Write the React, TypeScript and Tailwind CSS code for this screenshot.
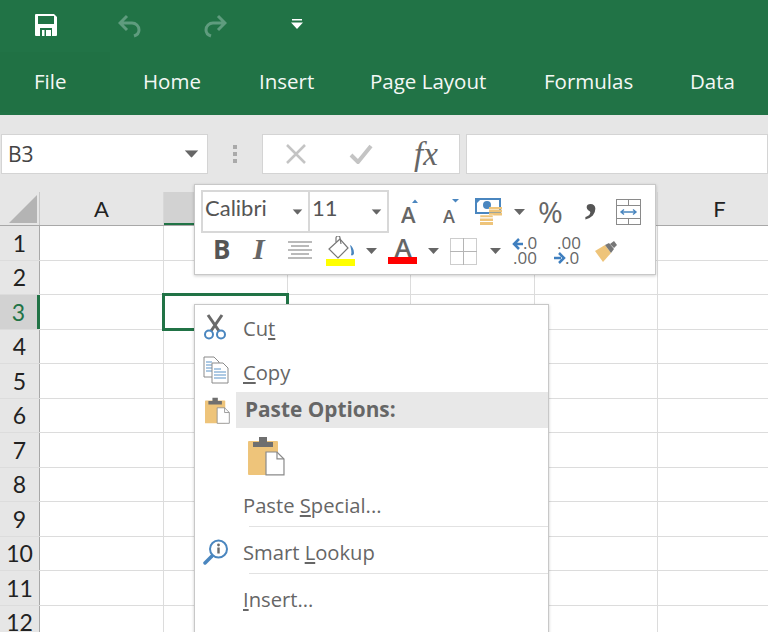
import { ReactNode } from "react";

const SEGOE = "font-['Open_Sans',sans-serif]";
const CALIBRI = "font-['Lato',sans-serif]";

const tabs = [
  { label: "File", width: "w-[110px] pl-[34px] bg-[#207144]" },
  { label: "Home", width: "w-[149px] pl-[33px]" },
  { label: "Insert", width: "w-[111px]" },
  { label: "Page Layout", width: "w-[174px]" },
  { label: "Formulas", width: "w-[146px]" },
  { label: "Data", width: "w-[78px]" },
];

const columns = [
  { label: "A", width: "w-[124px]" },
  { label: "", width: "w-[124px]", selected: true },
  { label: "", width: "w-[123px]" },
  { label: "", width: "w-[124px]" },
  { label: "", width: "w-[123px]" },
  { label: "F", width: "w-[124px]" },
];

const rows = [1, 2, 3, 4, 5, 6, 7, 8, 9, 10, 11, 12];

function Caret({ className = "" }: { className?: string }) {
  return (
    <svg width="11" height="6" viewBox="0 0 11 6" className={className}>
      <path d="M0 0h11L5.500 6z" fill="#666" />
    </svg>
  );
}

function SaveIcon() {
  return (
    <svg width="24" height="24" viewBox="0 0 24 24">
      <path d="M1 2a1 1 0 0 1 1-1h18l3 3v18a1 1 0 0 1-1 1H2a1 1 0 0 1-1-1z" fill="#fff" />
      <rect x="4" y="3" width="16" height="8" fill="#217346" />
      <rect x="6" y="15" width="12" height="8" fill="#217346" />
      <rect x="8" y="17" width="2.500" height="6" fill="#fff" />
      <rect x="12" y="17" width="5" height="6" fill="#fff" />
    </svg>
  );
}

function UndoIcon({ flip = false }: { flip?: boolean }) {
  return (
    <svg width="24" height="24" viewBox="0 0 24 24" className={flip ? "-scale-x-100" : ""}>
      <path d="M9 2 2 9l7 7M3 9h11a7 7 0 0 1 7 7c0 3-2 5-5 6" fill="none" stroke="#5f9c7e" strokeWidth="3" />
    </svg>
  );
}

function ScissorsIcon() {
  return (
    <svg width="24" height="26" viewBox="0 0 24 26" className="-translate-y-[2px]">
      <path d="M5 1l11 16M19 1 8 17" stroke="#6a6a6a" strokeWidth="3" fill="none" />
      <circle cx="6" cy="20.500" r="4" fill="none" stroke="#4a86bf" strokeWidth="2" />
      <circle cx="18" cy="20.500" r="4" fill="none" stroke="#4a86bf" strokeWidth="2" />
    </svg>
  );
}

function CopyIcon() {
  return (
    <svg width="26" height="28" viewBox="0 0 26 28" className="-translate-y-[2px]">
      <path d="M1 1h10l5 5v15H1z" fill="#fff" stroke="#8a8a8a" />
      <path d="M3 6h6M3 9h10M3 12h10M3 15h10" stroke="#5b93c7" />
      <path d="M9 7h11l5 5v15H9z" fill="#fff" stroke="#8a8a8a" />
      <path d="M11 13h7M11 16h12M11 19h12M11 22h12" stroke="#5b93c7" />
    </svg>
  );
}

function PasteIcon({ size }: { size: number }) {
  return (
    <svg width={size} height={size * 1.08} viewBox="0 0 37 40">
      <rect x="0" y="5" width="30" height="34" rx="1" fill="#eec47a" />
      <path d="M5 11V6h6V1h8v5h6v5z" fill="#6f6f6f" />
      <path d="M18 16h11l7 7v16H18z" fill="#fff" stroke="#8a8a8a" strokeWidth="1.200" />
      <path d="M29 16v7h7" fill="none" stroke="#8a8a8a" strokeWidth="1.200" />
    </svg>
  );
}

function LookupIcon() {
  return (
    <svg width="26" height="26" viewBox="0 0 26 26">
      <circle cx="15.500" cy="10" r="8.500" fill="#fff" stroke="#4a86bf" strokeWidth="2" />
      <path d="M9 17 2 24" stroke="#4a86bf" strokeWidth="3.500" strokeLinecap="round" />
      <circle cx="15.500" cy="6" r="1.400" fill="#6a6a6a" />
      <rect x="14.300" y="8.500" width="2.400" height="6" fill="#6a6a6a" />
    </svg>
  );
}

function GrowIcon({ small = false }: { small?: boolean }) {
  return (
    <svg width="20" height="26" viewBox="0 0 20 26">
      <text x="0" y="24" fontSize={small ? 18 : 22} fontFamily="Open Sans" fontWeight="600" fill="#666">A</text>
      <path d={small ? "M9 0h7l-3.500 3.500z" : "M11 4h6l-3-3.500z"} fill="#4a86bf" />
    </svg>
  );
}

function MoneyIcon() {
  return (
    <svg width="28" height="28" viewBox="0 0 28 28">
      <rect x="1" y="1" width="24" height="14" fill="#fff" stroke="#4a86bf" strokeWidth="2" />
      <path d="M1 1h5L1 6zM25 15h-4l4-4z" fill="#4a86bf" />
      <circle cx="12" cy="7" r="4" fill="#4a86bf" />
      <rect x="14" y="9" width="13" height="2.500" fill="#eec47a" />
      <rect x="14" y="12" width="13" height="2.500" fill="#eec47a" />
      <rect x="14" y="15" width="13" height="2.500" fill="#eec47a" />
      <rect x="5" y="17" width="13" height="2.500" fill="#eec47a" stroke="#fff" strokeWidth="0.500" />
      <rect x="5" y="20.500" width="13" height="2.500" fill="#eec47a" />
      <rect x="5" y="24" width="13" height="3" fill="#eec47a" />
    </svg>
  );
}

function WrapIcon() {
  return (
    <svg width="25" height="26" viewBox="0 0 25 26">
      <rect x="0.500" y="0.500" width="24" height="25" fill="#fff" stroke="#8a8a8a" />
      <path d="M0 6.500h25M0 19.500h25M12.500 0v6.500M12.500 19.500V26" stroke="#8a8a8a" />
      <path d="M6 13h13M8 10.500 5 13l3 2.500M17 10.500l3 2.500-3 2.500" fill="none" stroke="#4a86bf" strokeWidth="1.400" />
    </svg>
  );
}

function AlignIcon() {
  return (
    <svg width="24" height="20" viewBox="0 0 24 20">
      <path d="M0 1h24M3 5h18M0 9h24M3 13h18M0 17h24" stroke="#777" strokeWidth="1.200" />
    </svg>
  );
}

function FillIcon() {
  return (
    <svg width="30" height="30" viewBox="0 0 30 30">
      <path d="M14 3 3 13l9 9 10-10z" fill="#fff" stroke="#777" strokeWidth="1.200" />
      <path d="M10 6V2a2 2 0 0 1 4 0l1 6" fill="none" stroke="#777" strokeWidth="1.200" />
      <path d="M24 9c2 1 4 4 4 8 0 2-2 3-3 2 1-3 0-6-1-10z" fill="#4a86bf" />
      <rect x="0" y="23" width="29" height="7" fill="#ffff00" />
    </svg>
  );
}

function FontColorIcon() {
  return (
    <svg width="30" height="28" viewBox="0 0 30 28">
      <text x="15" y="20" textAnchor="middle" fontSize="26" fontFamily="Open Sans" fontWeight="600" fill="#666">A</text>
      <rect x="0" y="20" width="29" height="7" fill="#ff0000" />
    </svg>
  );
}

function BordersIcon() {
  return (
    <svg width="27" height="27" viewBox="0 0 27 27">
      <rect x="0.500" y="0.500" width="26" height="26" fill="none" stroke="#9a9a9a" strokeDasharray="1 1" />
      <path d="M13.500 0v27M0 13.500h27" stroke="#b5b5b5" />
    </svg>
  );
}

function DecimalIcon({ increase = false }: { increase?: boolean }) {
  const text = { fontSize: 17, fontFamily: "Open Sans", fill: "#666" };
  return (
    <svg width="28" height="28" viewBox="0 0 28 28">
      {increase ? (
        <>
          <text x="4" y="12" {...text}>.00</text>
          <path d="M1 21h7M6 16l5 5-5 5" fill="none" stroke="#3f7fbf" strokeWidth="2.500" />
          <text x="12" y="27" {...text}>.0</text>
        </>
      ) : (
        <>
          <path d="M11 7H3M7 2 2 7l5 5" fill="none" stroke="#3f7fbf" strokeWidth="2.500" />
          <text x="11" y="12" {...text}>.0</text>
          <text x="1" y="27" {...text}>.00</text>
        </>
      )}
    </svg>
  );
}

function BrushIcon() {
  return (
    <svg width="24" height="23" viewBox="0 0 24 23">
      <path d="M11 5 1 11l8 11 8-9z" fill="#eec47a" />
      <path d="M11 5l6 8 3-4-5-6zM16 4l4-3 3 4-3 3z" fill="#777" />
    </svg>
  );
}

function FontBox({ value, width }: { value: string; width: string }) {
  return (
    <div className={`${width} h-[43px] flex items-center justify-between border-2 border-[#d8d8d8] -mr-[2px] ${CALIBRI}`}>
      <span className="pl-[2px] pb-[7px] text-[22px] leading-none text-[#555]">{value}</span>
      <Caret className="mr-[5px] scale-90" />
    </div>
  );
}

function MiniToolbar() {
  return (
    <div className="absolute left-[194px] top-[184px] w-[462px] h-[91px] bg-white border border-[#c8c8c8] shadow-[0_1px_3px_rgba(0,0,0,0.2)] pl-[6px] pt-[5px]">
      <div className="flex items-center h-[43px]">
        <FontBox value="Calibri" width="w-[109px]" />
        <FontBox value="11" width="w-[81px]" />
        <div className="ml-[14px]"><GrowIcon /></div>
        <div className="ml-[22px]"><GrowIcon small /></div>
        <div className="ml-[12px]"><MoneyIcon /></div>
        <Caret className="ml-[11px]" />
        <span className={`ml-[13px] text-[30px] leading-none text-[#666] ${SEGOE}`}>%</span>
        <span className="ml-[22px] w-[12px] h-[17px] text-[50px] font-bold leading-[17px] text-[#555] font-['Liberation_Serif',serif] -translate-y-[17px]">,</span>
        <div className="ml-[19px]"><WrapIcon /></div>
      </div>
      <div className="flex items-center h-[36px]">
        <span className={`ml-[12px] w-[40px] text-[26px] font-bold leading-none text-[#555] -mt-[4px] ${SEGOE}`}>B</span>
        <span className="w-[35px] text-[30px] italic font-bold leading-none text-[#666] -mt-[4px] font-['Liberation_Serif',serif]">I</span>
        <AlignIcon />
        <div className="ml-[14px]"><FillIcon /></div>
        <Caret className="ml-[10px]" />
        <div className="ml-[11px]"><FontColorIcon /></div>
        <Caret className="ml-[10px]" />
        <div className="ml-[11px]"><BordersIcon /></div>
        <Caret className="ml-[13px]" />
        <div className="ml-[11px]"><DecimalIcon /></div>
        <div className="ml-[13px]"><DecimalIcon increase /></div>
        <div className="ml-[13px]"><BrushIcon /></div>
      </div>
    </div>
  );
}

function MenuRow({ icon, children, className = "" }: { icon?: ReactNode; children: ReactNode; className?: string }) {
  return (
    <div className={`flex items-center ${className}`}>
      <div className="w-[48px] flex pl-[8px]">{icon}</div>
      <span className="text-[20.200px] leading-none text-[#666]">{children}</span>
    </div>
  );
}

function ContextMenu() {
  return (
    <div className={`absolute left-[194px] top-[304px] w-[355px] h-[340px] bg-white border border-[#c8c8c8] shadow-[0_1px_3px_rgba(0,0,0,0.2)] pt-[2px] ${SEGOE}`}>
      <MenuRow icon={<ScissorsIcon />} className="h-[45px] pb-[2px]">
        Cu<span className="underline underline-offset-2">t</span>
      </MenuRow>
      <MenuRow icon={<CopyIcon />} className="h-[40px]">
        <span className="underline underline-offset-2">C</span>opy
      </MenuRow>
      <div className="flex items-center h-[36px]">
        <div className="w-[41px] flex justify-center pl-[3px]"><PasteIcon size={25} /></div>
        <div className="flex-1 h-full flex items-center pl-[9px] bg-[#e8e8e8] text-[20.800px] font-bold text-[#666]">
          Paste Options:
        </div>
      </div>
      <div className="h-[58px] pl-[53px] pt-[8px]"><PasteIcon size={37} /></div>
      <MenuRow className="h-[40px] pb-[2px]">
        Paste <span className="underline underline-offset-2">S</span>pecial...
      </MenuRow>
      <div className="ml-[54px] h-px bg-[#e2e2e2]" />
      <MenuRow icon={<LookupIcon />} className="h-[46px] pt-[4px]">
        Smart <span className="underline underline-offset-2">L</span>ookup
      </MenuRow>
      <div className="ml-[54px] h-px bg-[#e2e2e2]" />
      <MenuRow className="h-[52px] pb-[2px]">
        <span className="underline underline-offset-2">I</span>nsert...
      </MenuRow>
    </div>
  );
}

export default function App() {
  return (
    <div className={`relative w-[768px] h-[632px] overflow-hidden bg-white ${SEGOE}`}>
      {/* Title bar and tabs */}
      <div className="h-[115px] bg-[#217346]">
        <div className="h-[52px] flex items-center">
          <div className="ml-[34px] -mt-[3px]"><SaveIcon /></div>
          <div className="ml-[60px]"><UndoIcon /></div>
          <div className="ml-[61px]"><UndoIcon flip /></div>
          <svg width="12" height="10" viewBox="0 0 12 10" className="ml-[64px] -mt-[5px]">
            <path d="M1 0h10v1.500H1zM0 3.500h12L6 10z" fill="#fff" />
          </svg>
        </div>
        <div className="h-[63px] flex">
          {tabs.map((tab) => (
            <div key={tab.label} className={`h-[60px] pb-[2px] flex items-center text-[20.500px] text-[#f4f8f5] ${tab.width}`}>
              {tab.label}
            </div>
          ))}
        </div>
      </div>

      {/* Formula bar */}
      <div className="h-[77px] bg-[#e6e6e6] flex pt-[19px] pl-[1px]">
        <div className="w-[207px] h-[40px] bg-white border border-[#d4d4d4] flex items-center justify-between pl-[6px] pr-[10px]">
          <span className="pt-[2px] text-[21px] text-[#444]">B3</span>
          <Caret className="scale-125" />
        </div>
        <div className="w-[54px] h-[40px] flex flex-col items-center justify-center gap-[3px]">
          <div className="w-[4px] h-[4px] bg-[#aaa]" />
          <div className="w-[4px] h-[4px] bg-[#aaa]" />
          <div className="w-[4px] h-[4px] bg-[#aaa]" />
        </div>
        <div className="w-[198px] h-[40px] bg-white border border-[#d4d4d4] flex items-center">
          <svg width="22" height="20" viewBox="0 0 22 20" className="ml-[22px]">
            <path d="M2 1l18 18M20 1 2 19" stroke="#c4c4c4" strokeWidth="2.500" />
          </svg>
          <svg width="24" height="20" viewBox="0 0 24 20" className="ml-[42px]">
            <path d="M2 11l7 7L22 2" fill="none" stroke="#c4c4c4" strokeWidth="4" />
          </svg>
          <span className="ml-[41px] text-[33px] italic leading-none text-[#666] font-['Liberation_Serif',serif]">fx</span>
        </div>
        <div className="flex-1 h-[40px] ml-[6px] bg-white border border-[#d4d4d4]" />
      </div>

      {/* Column headers */}
      <div className="h-[34px] flex bg-[#e6e6e6] border-b border-[#a8a8a8]">
        <div className="w-[40px] shrink-0 flex items-end justify-end pr-[2px] pb-[2px] border-r border-[#c8c8c8]">
          <svg width="28" height="28" viewBox="0 0 28 28">
            <path d="M28 0v28H0z" fill="#b4b4b4" />
          </svg>
        </div>
        {columns.map((col, i) => (
          <div
            key={i}
            className={`${col.width} shrink-0 flex items-center justify-center text-[22px] text-[#222] ${CALIBRI} ${
              col.selected ? "bg-[#d2d2d2] border-b-2 border-[#217346]" : "border-r border-[#d8d8d8]"
            }`}
          >
            {col.label}
          </div>
        ))}
      </div>

      {/* Grid */}
      {rows.map((row) => (
        <div key={row} className="h-[34.500px] flex border-b border-[#dcdcdc]">
          <div
            className={`w-[40px] shrink-0 flex items-center justify-center text-[23px] ${CALIBRI} ${
              row === 3
                ? "bg-[#d2d2d2] text-[#217346] border-r-[3px] border-[#217346]"
                : "bg-[#e6e6e6] text-[#222] border-r border-[#a8a8a8]"
            }`}
          >
            {row}
          </div>
          {columns.map((col, i) => (
            <div key={i} className={`${col.width} shrink-0 border-r border-[#dcdcdc]`} />
          ))}
        </div>
      ))}

      {/* Selected cell */}
      <div className="absolute left-[162px] top-[293px] w-[127px] h-[38px] border-[3px] border-[#217346]" />

      <MiniToolbar />
      <ContextMenu />
    </div>
  );
}
